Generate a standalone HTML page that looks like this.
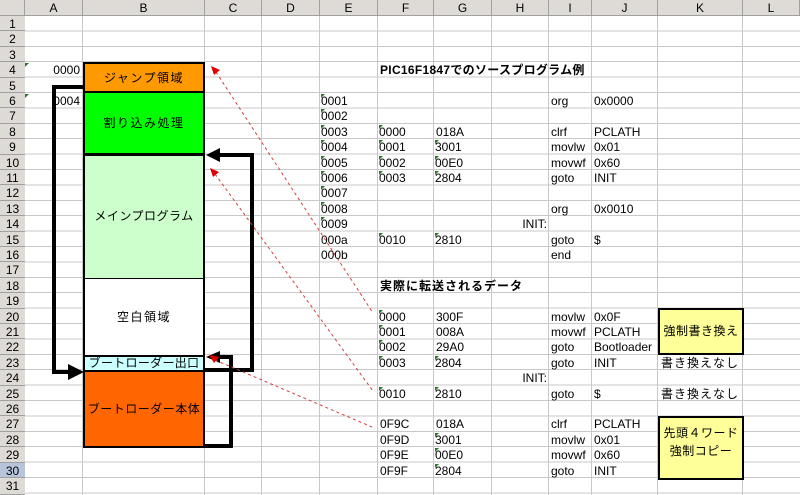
<!DOCTYPE html>
<html><head><meta charset="utf-8"><style>
body{margin:0;width:800px;height:495px;overflow:hidden;background:#fff;font-family:"Liberation Sans","Noto Sans CJK JP",sans-serif;font-size:12px;color:#000;position:relative}
.a{position:absolute;white-space:nowrap;line-height:16px;height:15px}
.r{text-align:right}
.hd{position:absolute;background:#dedbd6;color:#000;text-align:center;font-size:12px;line-height:16px;box-sizing:border-box;border-right:1px solid #a0a0a0;border-bottom:1px solid #a0a0a0}
.t::before{content:"";position:absolute;left:0;top:1px;border-top:4px solid #2a7a2a;border-right:4px solid transparent}
.jp{letter-spacing:1.5px;white-space:nowrap;overflow:hidden}
</style></head><body>
<div style="position:absolute;left:25px;top:16px;width:775px;height:479px;background-image:repeating-linear-gradient(to bottom,transparent 0,transparent 14.4px,#c8c8c8 14.4px,#c8c8c8 15.4px)"></div>
<div style="position:absolute;left:82px;top:16px;width:1px;height:479px;background:#c8c8c8"></div>
<div style="position:absolute;left:204px;top:16px;width:1px;height:479px;background:#c8c8c8"></div>
<div style="position:absolute;left:261px;top:16px;width:1px;height:479px;background:#c8c8c8"></div>
<div style="position:absolute;left:319px;top:16px;width:1px;height:479px;background:#c8c8c8"></div>
<div style="position:absolute;left:377px;top:16px;width:1px;height:479px;background:#c8c8c8"></div>
<div style="position:absolute;left:433px;top:16px;width:1px;height:479px;background:#c8c8c8"></div>
<div style="position:absolute;left:491px;top:16px;width:1px;height:479px;background:#c8c8c8"></div>
<div style="position:absolute;left:548px;top:16px;width:1px;height:479px;background:#c8c8c8"></div>
<div style="position:absolute;left:591px;top:16px;width:1px;height:479px;background:#c8c8c8"></div>
<div style="position:absolute;left:657px;top:16px;width:1px;height:479px;background:#c8c8c8"></div>
<div style="position:absolute;left:742px;top:16px;width:1px;height:479px;background:#c8c8c8"></div>

<div class="hd" style="left:0;top:0;width:25px;height:16px"></div>
<div class="hd" style="left:25px;top:0;width:58px;height:16px">A</div>
<div class="hd" style="left:83px;top:0;width:122px;height:16px">B</div>
<div class="hd" style="left:205px;top:0;width:57px;height:16px">C</div>
<div class="hd" style="left:262px;top:0;width:58px;height:16px">D</div>
<div class="hd" style="left:320px;top:0;width:58px;height:16px">E</div>
<div class="hd" style="left:378px;top:0;width:56px;height:16px">F</div>
<div class="hd" style="left:434px;top:0;width:58px;height:16px">G</div>
<div class="hd" style="left:492px;top:0;width:57px;height:16px">H</div>
<div class="hd" style="left:549px;top:0;width:43px;height:16px">I</div>
<div class="hd" style="left:592px;top:0;width:66px;height:16px">J</div>
<div class="hd" style="left:658px;top:0;width:85px;height:16px">K</div>
<div class="hd" style="left:743px;top:0;width:57px;height:16px">L</div>
<div style="position:absolute;left:0;top:16px;width:25px;height:479px;background:#dedbd6;border-right:1px solid #a0a0a0;box-sizing:border-box"></div>
<div class="hd" style="left:0;top:16px;width:25px;height:15.4px;border-right:0">1</div>
<div class="hd" style="left:0;top:31.4px;width:25px;height:15.4px;border-right:0">2</div>
<div class="hd" style="left:0;top:46.8px;width:25px;height:15.4px;border-right:0">3</div>
<div class="hd" style="left:0;top:62.2px;width:25px;height:15.4px;border-right:0">4</div>
<div class="hd" style="left:0;top:77.6px;width:25px;height:15.4px;border-right:0">5</div>
<div class="hd" style="left:0;top:93px;width:25px;height:15.4px;border-right:0">6</div>
<div class="hd" style="left:0;top:108.4px;width:25px;height:15.4px;border-right:0">7</div>
<div class="hd" style="left:0;top:123.8px;width:25px;height:15.4px;border-right:0">8</div>
<div class="hd" style="left:0;top:139.2px;width:25px;height:15.4px;border-right:0">9</div>
<div class="hd" style="left:0;top:154.6px;width:25px;height:15.4px;border-right:0">10</div>
<div class="hd" style="left:0;top:170px;width:25px;height:15.4px;border-right:0">11</div>
<div class="hd" style="left:0;top:185.4px;width:25px;height:15.4px;border-right:0">12</div>
<div class="hd" style="left:0;top:200.8px;width:25px;height:15.4px;border-right:0">13</div>
<div class="hd" style="left:0;top:216.2px;width:25px;height:15.4px;border-right:0">14</div>
<div class="hd" style="left:0;top:231.6px;width:25px;height:15.4px;border-right:0">15</div>
<div class="hd" style="left:0;top:247px;width:25px;height:15.4px;border-right:0">16</div>
<div class="hd" style="left:0;top:262.4px;width:25px;height:15.4px;border-right:0">17</div>
<div class="hd" style="left:0;top:277.8px;width:25px;height:15.4px;border-right:0">18</div>
<div class="hd" style="left:0;top:293.2px;width:25px;height:15.4px;border-right:0">19</div>
<div class="hd" style="left:0;top:308.6px;width:25px;height:15.4px;border-right:0">20</div>
<div class="hd" style="left:0;top:324px;width:25px;height:15.4px;border-right:0">21</div>
<div class="hd" style="left:0;top:339.4px;width:25px;height:15.4px;border-right:0">22</div>
<div class="hd" style="left:0;top:354.8px;width:25px;height:15.4px;border-right:0">23</div>
<div class="hd" style="left:0;top:370.2px;width:25px;height:15.4px;border-right:0">24</div>
<div class="hd" style="left:0;top:385.6px;width:25px;height:15.4px;border-right:0">25</div>
<div class="hd" style="left:0;top:401px;width:25px;height:15.4px;border-right:0">26</div>
<div class="hd" style="left:0;top:416.4px;width:25px;height:15.4px;border-right:0">27</div>
<div class="hd" style="left:0;top:431.8px;width:25px;height:15.4px;border-right:0">28</div>
<div class="hd" style="left:0;top:447.2px;width:25px;height:15.4px;border-right:0">29</div>
<div class="hd" style="left:0;top:462.6px;width:25px;height:15.4px;border-right:0;background:#b8c4dc">30</div>
<div class="hd" style="left:0;top:478px;width:25px;height:17px;border-right:0">31</div>

<div style="position:absolute;left:83px;top:62px;width:122px;height:31px;background:#ff9900;box-sizing:border-box;border:2px solid #000;text-align:center;line-height:29px" class="jp">ジャンプ領域</div>
<div style="position:absolute;left:83px;top:93px;width:122px;height:62px;background:#00ff00;box-sizing:border-box;border:2px solid #000;border-top:0;text-align:center;line-height:60px" class="jp">割り込み処理</div>
<div style="position:absolute;left:83px;top:155px;width:122px;height:123px;background:#ccffcc;box-sizing:border-box;border-left:2px solid #000;border-right:2px solid #000;border-top:1px solid #000;text-align:center;line-height:120px;letter-spacing:0.5px" class="jp">メインプログラム</div>
<div style="position:absolute;left:83px;top:278px;width:122px;height:77px;background:#fff;box-sizing:border-box;border-left:2px solid #000;border-right:2px solid #000;border-top:1px solid #000;text-align:center;line-height:76px" class="jp">空白領域</div>
<div style="position:absolute;left:83px;top:355px;width:122px;height:15px;background:#ccffff;box-sizing:border-box;border-left:2px solid #000;border-right:2px solid #000;border-top:2px solid #000;text-align:center;line-height:13px;letter-spacing:0.3px" class="jp">ブートローダー出口</div>
<div style="position:absolute;left:83px;top:370px;width:122px;height:78px;background:#ff6600;box-sizing:border-box;border:2px solid #000;text-align:center;line-height:74px;letter-spacing:0.5px" class="jp">ブートローダー本体</div>

<div style="position:absolute;left:658px;top:308px;width:86px;height:47px;background:#ffff99;box-sizing:border-box;border:2px solid #000;text-align:center;line-height:42px;letter-spacing:0.5px" class="jp">強制書き換え</div>
<div style="position:absolute;left:658px;top:416px;width:86px;height:64px;background:#ffff99;box-sizing:border-box;border:2px solid #000;text-align:center;line-height:18px;padding-top:6px;letter-spacing:0.5px" class="jp">先頭４ワード<br>強制コピー</div>

<svg style="position:absolute;left:0;top:0" width="800" height="495">
<g fill="none" stroke="#000" stroke-width="4">
<polyline points="83,87 54,87 54,372 70,372"/>
<polyline points="205,370 252,370 252,155 218,155"/>
<polyline points="205,446 231,446 231,357 218,357"/>
</g>
<g fill="#000">
<polygon points="84,372 68,364 68,380"/>
<polygon points="206,155 220,148 220,162"/>
<polygon points="206,357 220,351 220,363"/>
</g>
<g stroke="#d04040" stroke-width="1" stroke-dasharray="3,3" fill="none">
<line x1="216" y1="72" x2="373" y2="313"/>
<line x1="215" y1="174" x2="373" y2="391"/>
<line x1="215" y1="360" x2="372" y2="427"/>
</g>
<g fill="#e00000">
<polygon points="211,66 220,70 214,75"/>
<polygon points="210,168 219,172 213,177"/>
<polygon points="209,355 219,357 214,363"/>
</g>
</svg>

<div class="a r t" style="left:25px;top:62px;width:55px">0000</div>
<div class="a r t" style="left:25px;top:93px;width:55px">0004</div>
<div class="a" style="left:380px;top:62px;font-weight:bold;letter-spacing:0.3px">PIC16F1847でのソースプログラム例</div>
<div class="a" style="left:380px;top:278px;font-weight:bold;letter-spacing:1px">実際に転送されるデータ</div>

<div class="a t" style="left:321px;top:93px">0001</div>
<div class="a t" style="left:321px;top:108.4px">0002</div>
<div class="a t" style="left:321px;top:123.8px">0003</div>
<div class="a t" style="left:321px;top:139.2px">0004</div>
<div class="a t" style="left:321px;top:154.6px">0005</div>
<div class="a t" style="left:321px;top:170px">0006</div>
<div class="a t" style="left:321px;top:185.4px">0007</div>
<div class="a t" style="left:321px;top:200.8px">0008</div>
<div class="a t" style="left:321px;top:216.2px">0009</div>
<div class="a" style="left:321px;top:231.6px">000a</div>
<div class="a" style="left:321px;top:247px">000b</div>

<div class="a" style="left:551px;top:93px">org</div><div class="a" style="left:594px;top:93px">0x0000</div>
<div class="a t" style="left:379px;top:123.8px">0000</div><div class="a" style="left:436px;top:123.8px">018A</div><div class="a" style="left:551px;top:123.8px">clrf</div><div class="a" style="left:594px;top:123.8px">PCLATH</div>
<div class="a t" style="left:379px;top:139.2px">0001</div><div class="a t" style="left:435px;top:139.2px">3001</div><div class="a" style="left:551px;top:139.2px">movlw</div><div class="a" style="left:594px;top:139.2px">0x01</div>
<div class="a t" style="left:379px;top:154.6px">0002</div><div class="a t" style="left:435px;top:154.6px">00E0</div><div class="a" style="left:551px;top:154.6px">movwf</div><div class="a" style="left:594px;top:154.6px">0x60</div>
<div class="a t" style="left:379px;top:170px">0003</div><div class="a t" style="left:435px;top:170px">2804</div><div class="a" style="left:551px;top:170px">goto</div><div class="a" style="left:594px;top:170px">INIT</div>
<div class="a" style="left:551px;top:200.8px">org</div><div class="a" style="left:594px;top:200.8px">0x0010</div>
<div class="a r" style="left:492px;top:216.2px;width:55px">INIT:</div>
<div class="a t" style="left:379px;top:231.6px">0010</div><div class="a t" style="left:435px;top:231.6px">2810</div><div class="a" style="left:551px;top:231.6px">goto</div><div class="a" style="left:594px;top:231.6px">$</div>
<div class="a" style="left:551px;top:247px">end</div>

<div class="a t" style="left:379px;top:308.6px">0000</div><div class="a" style="left:436px;top:308.6px">300F</div><div class="a" style="left:551px;top:308.6px">movlw</div><div class="a" style="left:594px;top:308.6px">0x0F</div>
<div class="a t" style="left:379px;top:324px">0001</div><div class="a" style="left:436px;top:324px">008A</div><div class="a" style="left:551px;top:324px">movwf</div><div class="a" style="left:594px;top:324px">PCLATH</div>
<div class="a t" style="left:379px;top:339.4px">0002</div><div class="a" style="left:436px;top:339.4px">29A0</div><div class="a" style="left:551px;top:339.4px">goto</div><div class="a" style="left:594px;top:339.4px">Bootloader</div>
<div class="a t" style="left:379px;top:354.8px">0003</div><div class="a t" style="left:435px;top:354.8px">2804</div><div class="a" style="left:551px;top:354.8px">goto</div><div class="a" style="left:594px;top:354.8px">INIT</div><div class="a" style="left:661px;top:354.8px;letter-spacing:1px">書き換えなし</div>
<div class="a r" style="left:492px;top:370.2px;width:55px">INIT:</div>
<div class="a t" style="left:379px;top:385.6px">0010</div><div class="a t" style="left:435px;top:385.6px">2810</div><div class="a" style="left:551px;top:385.6px">goto</div><div class="a" style="left:594px;top:385.6px">$</div><div class="a" style="left:661px;top:385.6px;letter-spacing:1px">書き換えなし</div>

<div class="a" style="left:380px;top:416.4px">0F9C</div><div class="a" style="left:436px;top:416.4px">018A</div><div class="a" style="left:551px;top:416.4px">clrf</div><div class="a" style="left:594px;top:416.4px">PCLATH</div>
<div class="a" style="left:380px;top:431.8px">0F9D</div><div class="a t" style="left:435px;top:431.8px">3001</div><div class="a" style="left:551px;top:431.8px">movlw</div><div class="a" style="left:594px;top:431.8px">0x01</div>
<div class="a" style="left:380px;top:447.2px">0F9E</div><div class="a t" style="left:435px;top:447.2px">00E0</div><div class="a" style="left:551px;top:447.2px">movwf</div><div class="a" style="left:594px;top:447.2px">0x60</div>
<div class="a" style="left:380px;top:462.6px">0F9F</div><div class="a t" style="left:435px;top:462.6px">2804</div><div class="a" style="left:551px;top:462.6px">goto</div><div class="a" style="left:594px;top:462.6px">INIT</div>
</body></html>
